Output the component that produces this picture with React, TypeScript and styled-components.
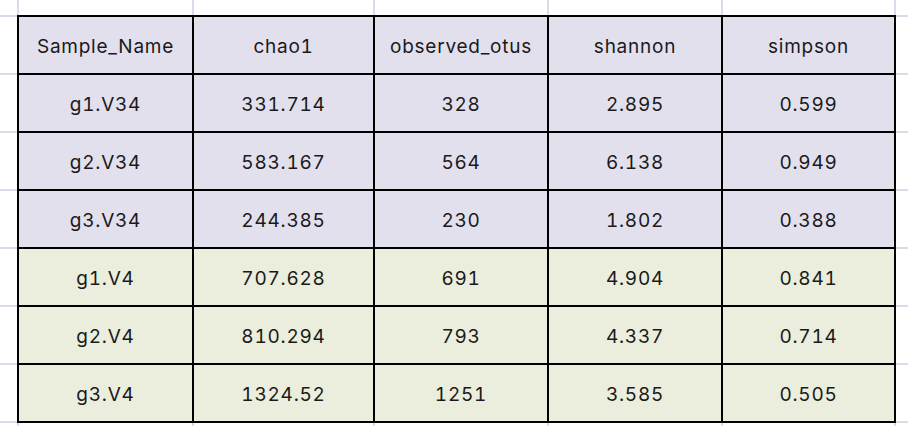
import React from "react";
import styled, { createGlobalStyle } from "styled-components";

const GlobalStyle = createGlobalStyle`
  html, body { margin: 0; padding: 0; background: #ffffff; }
  body { font-family: Inter, "Noto Sans", "Liberation Sans", sans-serif; }
`;

const COLS = [173, 179, 172, 172, 171];
const LINE = "#d7dce8";
const colLines = [17, 192, 373, 547, 721, 894];
const rowLines = [15, 73, 131, 189, 247, 305, 363, 421];

const gridBg = [
  ...colLines.map(() => `linear-gradient(${LINE}, ${LINE})`),
  ...rowLines.map(() => `linear-gradient(${LINE}, ${LINE})`),
].join(", ");
const gridPos = [
  ...colLines.map((x) => `${x}px 0`),
  ...rowLines.map((y) => `0 ${y}px`),
].join(", ");
const gridSize = [
  ...colLines.map(() => `2px 100%`),
  ...rowLines.map(() => `100% 2px`),
].join(", ");

const Sheet = styled.div`
  width: 908px;
  height: 426px;
  overflow: hidden;
  background-color: #ffffff;
  background-image: ${gridBg};
  background-position: ${gridPos};
  background-size: ${gridSize};
  background-repeat: no-repeat;
  padding: 15px 0 0 17px;
  box-sizing: border-box;
`;

const Table = styled.div`
  display: grid;
  grid-template-columns: ${COLS.map((c) => `${c}px`).join(" ")};
  grid-auto-rows: 56px;
  gap: 2px;
  padding: 2px;
  background: #000000;
  width: max-content;
`;

const Cell = styled.div<{ $tone: "violet" | "green" }>`
  display: flex;
  align-items: center;
  justify-content: center;
  background: ${(p) => (p.$tone === "violet" ? "#e3e0ee" : "#ebeedd")};
  color: #1a1a1a;
  font-size: 19px;
  letter-spacing: 0.75px;
  font-variant-numeric: tabular-nums;
  padding-top: 2px;
`;

const header = ["Sample_Name", "chao1", "observed_otus", "shannon", "simpson"];
const rows = [
  ["g1.V34", "331.714", "328", "2.895", "0.599"],
  ["g2.V34", "583.167", "564", "6.138", "0.949"],
  ["g3.V34", "244.385", "230", "1.802", "0.388"],
  ["g1.V4", "707.628", "691", "4.904", "0.841"],
  ["g2.V4", "810.294", "793", "4.337", "0.714"],
  ["g3.V4", "1324.52", "1251", "3.585", "0.505"],
];

export default function App() {
  return (
    <>
      <GlobalStyle />
      <Sheet>
        <Table>
          {header.map((h) => (
            <Cell key={h} $tone="violet">
              {h}
            </Cell>
          ))}
          {rows.map((r, i) =>
            r.map((v, j) => (
              <Cell key={`${i}-${j}`} $tone={i < 3 ? "violet" : "green"}>
                {v}
              </Cell>
            ))
          )}
        </Table>
      </Sheet>
    </>
  );
}
